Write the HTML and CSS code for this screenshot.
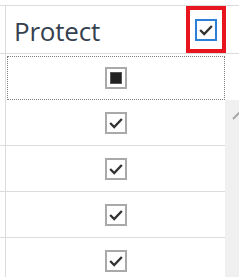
FILE: index.html
```html
<!DOCTYPE html>
<html>
<head>
<meta charset="utf-8">
<link rel="stylesheet" href="styles.css">
</head>
<body>
<div class="grid">
  <div class="header">
    <div class="gutter"></div>
    <div class="title">Protect</div>
    <div class="mark">
      <span class="box box-blue">
        <svg viewBox="0 0 20 20" width="18" height="18"><polyline points="3.5,10 8,14.5 16.5,5.5" fill="none" stroke="#333" stroke-width="2.6"/></svg>
      </span>
    </div>
  </div>
  <div class="focusrow">
    <div class="gutter"></div>
    <div class="focus">
      <span class="box"><span class="fill"></span></span>
    </div>
  </div>
  <div class="list">
    <div class="rows">
      <div class="row"><div class="gutter"></div><div class="cell"><span class="box"><svg viewBox="0 0 20 20" width="18" height="18"><polyline points="3.5,10 8,14.5 16.5,5.5" fill="none" stroke="#333" stroke-width="2.6"/></svg></span></div></div>
      <div class="row"><div class="gutter"></div><div class="cell"><span class="box"><svg viewBox="0 0 20 20" width="18" height="18"><polyline points="3.5,10 8,14.5 16.5,5.5" fill="none" stroke="#333" stroke-width="2.6"/></svg></span></div></div>
      <div class="row"><div class="gutter"></div><div class="cell"><span class="box"><svg viewBox="0 0 20 20" width="18" height="18"><polyline points="3.5,10 8,14.5 16.5,5.5" fill="none" stroke="#333" stroke-width="2.6"/></svg></span></div></div>
      <div class="row"><div class="gutter"></div><div class="cell"><span class="box"><svg viewBox="0 0 20 20" width="18" height="18"><polyline points="3.5,10 8,14.5 16.5,5.5" fill="none" stroke="#333" stroke-width="2.6"/></svg></span></div></div>
    </div>
    <div class="scroll">
      <svg class="arrow" viewBox="0 0 20 12" width="20" height="12"><polyline points="2,11 10,3 18,11" fill="none" stroke="#a8a8a8" stroke-width="2"/></svg>
    </div>
  </div>
</div>
</body>
</html>
```
FILE: styles.css
```css
html, body {
  margin: 0;
  padding: 0;
  background: #ffffff;
}
.grid {
  width: 239px;
  height: 277px;
  overflow: hidden;
  padding-top: 5px;
  box-sizing: border-box;
  font-family: "Open Sans", "Noto Sans", sans-serif;
}
.header {
  display: flex;
  height: 49px;
  box-sizing: border-box;
  border-top: 1px solid #dcdcdc;
  border-bottom: 1px solid #dcdcdc;
}
.gutter {
  width: 5px;
  flex: none;
  border-right: 1px solid #dcdcdc;
}
.title {
  flex: 1;
  display: flex;
  align-items: center;
  padding-left: 8px;
  padding-top: 2px;
  font-size: 26px;
  letter-spacing: -0.2px;
  color: #35414f;
}
.mark {
  width: 40px;
  height: 47px;
  box-sizing: border-box;
  border: 4px solid #e8141e;
  margin-right: 13px;
  display: flex;
  align-items: center;
  justify-content: center;
}
.box {
  width: 22px;
  height: 22px;
  box-sizing: border-box;
  border: 2px solid #a9a9a9;
  background: #fff;
  display: flex;
  align-items: center;
  justify-content: center;
}
.box-blue {
  border-color: #2a7fd6;
  margin-top: 1px;
}
.fill {
  width: 12px;
  height: 12px;
  box-sizing: border-box;
  background: #222;
  border: 1px solid #555;
}
.focusrow {
  display: flex;
  height: 46px;
  box-sizing: border-box;
  padding-top: 2px;
  width: 226px;
}
.focusrow .gutter {
  margin-top: -2px;
  margin-right: 1px;
}
.focus {
  width: 218px;
  height: 44px;
  box-sizing: border-box;
  border: 1px dotted #7c7c7c;
  display: flex;
  align-items: center;
  justify-content: center;
}
.list {
  display: flex;
}
.rows {
  width: 225px;
  flex: none;
}
.row {
  display: flex;
  height: 46px;
  box-sizing: border-box;
  border-bottom: 1px solid #dcdcdc;
}
.cell {
  flex: 1;
  display: flex;
  align-items: center;
  justify-content: center;
}
.scroll {
  flex: 1;
  background: #f0f0f0;
  position: relative;
  overflow: hidden;
  height: 180px;
}
.arrow {
  position: absolute;
  left: 6px;
  top: 8px;
}
```
